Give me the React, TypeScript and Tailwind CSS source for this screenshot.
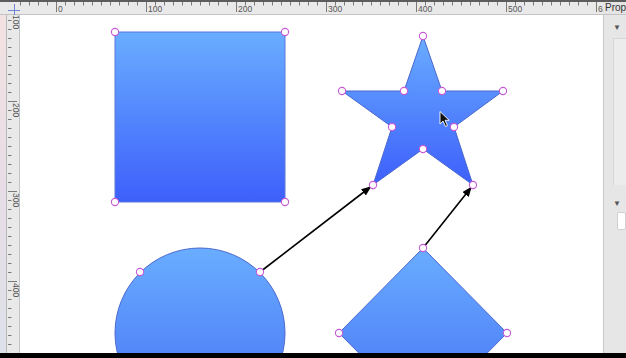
import React from 'react';

const HANDLE = '#c65bd6';

const topTicks: number[] = [];
for (let x = 20; x <= 604; x += 1) {
  if ((x - 56) % 9 === 0) topTicks.push(x);
}
const leftTicks: number[] = [];
for (let y = 11; y <= 353; y += 9) leftTicks.push(y);

const topLabels = [
  { x: 56, t: '0' },
  { x: 146, t: '100' },
  { x: 236, t: '200' },
  { x: 326, t: '300' },
  { x: 416, t: '400' },
  { x: 506, t: '500' },
  { x: 596, t: '600' },
];
const leftLabels = [
  { y: 13, t: '100' },
  { y: 101, t: '200' },
  { y: 191, t: '300' },
  { y: 281, t: '400' },
];

function Handle({ x, y }: { x: number; y: number }) {
  return <circle cx={x} cy={y} r={3.6} fill="#fff" stroke={HANDLE} strokeWidth={1.1} />;
}

function TopRuler() {
  return (
    <svg width={583} height={13} viewBox="20 2 583 13" className="block">
      <rect x={20} y={2} width={583} height={13} fill="#e9e9e9" />
      <line x1={20} y1={14.5} x2={603} y2={14.5} stroke="#c4c4c4" />
      {topTicks.map((x) => {
        const long = (x - 56) % 90 === 0;
        return (
          <line key={x} x1={x + 0.5} y1={2} x2={x + 0.5} y2={long ? 12 : 5.5} stroke="#7a7a7a" strokeWidth={1} />
        );
      })}
      {topLabels.map((l) => (
        <text key={l.t} x={l.x + 2} y={12} fontSize={8.5} fill="#555" fontFamily="'Liberation Sans', Arial, sans-serif">
          {l.t}
        </text>
      ))}
    </svg>
  );
}

function LeftRuler() {
  return (
    <svg width={13} height={338} viewBox="7 15 13 338" className="block">
      <rect x={7} y={15} width={13} height={338} fill="#e9e9e9" />
      <line x1={19.5} y1={15} x2={19.5} y2={353} stroke="#c4c4c4" />
      {leftTicks.map((y) => {
        const long = (y - 11) % 90 === 0;
        return <line key={y} x1={8} y1={y + 0.5} x2={long ? 17 : 11.5} y2={y + 0.5} stroke="#7a7a7a" strokeWidth={1} />;
      })}
      {leftLabels.map((l) => (
        <text
          key={l.t}
          x={0}
          y={0}
          transform={`translate(13 ${l.y + 2}) rotate(90)`}
          fontSize={8.5}
          fill="#555"
          fontFamily="'Liberation Sans', Arial, sans-serif"
        >
          {l.t}
        </text>
      ))}
    </svg>
  );
}

function Canvas() {
  const star = [
    [423, 36],
    [442, 91],
    [503, 91],
    [454, 127],
    [473, 185],
    [423, 149],
    [373, 185],
    [392, 127],
    [342, 91],
    [404, 91],
  ];
  return (
    <svg width={583} height={338} viewBox="20 15 583 338" className="block bg-white">
      <defs>
        <linearGradient id="g" x1="0" y1="0" x2="0" y2="1">
          <stop offset="0" stopColor="#69adff" />
          <stop offset="1" stopColor="#3d5ffb" />
        </linearGradient>
        <linearGradient id="gc" x1="0" y1="0" x2="0" y2="1">
          <stop offset="0" stopColor="#69adff" />
          <stop offset="1" stopColor="#4670f5" />
        </linearGradient>
        <marker id="ah" viewBox="0 0 10 8" refX={9.5} refY={4} markerWidth={10} markerHeight={8} markerUnits="userSpaceOnUse" orient="auto">
          <path d="M0 0 L10 4 L0 8 Z" fill="#000" />
        </marker>
      </defs>
      <rect x={20} y={15} width={583} height={338} fill="#fff" />

      {/* square */}
      <rect x={115} y={32} width={170} height={170} fill="url(#g)" stroke="#5a78d8" strokeWidth={1} />

      {/* star */}
      <polygon points={star.map((p) => p.join(',')).join(' ')} fill="url(#g)" stroke="#4a68d0" strokeWidth={1} />

      {/* circle */}
      <circle cx={200} cy={333} r={85} fill="url(#gc)" stroke="#4a68d0" strokeWidth={1} />

      {/* diamond */}
      <polygon points="423,248 507,333 423,418 339,333" fill="url(#gc)" stroke="#4a68d0" strokeWidth={1} />

      {/* connectors */}
      <line x1={260} y1={272} x2={371} y2={186.5} stroke="#000" strokeWidth={1.6} markerEnd="url(#ah)" />
      <line x1={423} y1={248} x2={471.5} y2={187} stroke="#000" strokeWidth={1.6} markerEnd="url(#ah)" />

      {/* handles */}
      <Handle x={115} y={32} />
      <Handle x={285} y={32} />
      <Handle x={115} y={202} />
      <Handle x={285} y={202} />
      {star.map((p, i) => (
        <Handle key={i} x={p[0]} y={p[1]} />
      ))}
      <Handle x={140} y={272} />
      <Handle x={260} y={272} />
      <Handle x={423} y={248} />
      <Handle x={339} y={333} />
      <Handle x={507} y={333} />

      {/* mouse pointer */}
      <path
        d="M440 111.5 L440 124 L443 121 L445.5 126.5 L447.5 125.6 L445.1 120.3 L449.2 120.3 Z"
        fill="#111"
        stroke="#fff"
        strokeWidth={0.9}
        strokeLinejoin="round"
      />
    </svg>
  );
}

export default function App() {
  return (
    <div className="w-[626px] h-[358px] flex flex-col bg-black overflow-hidden font-['Liberation_Sans',Arial,sans-serif]">
      <div className="h-[2px] bg-[#5c5c5c]" />
      <div className="flex h-[13px]">
        {/* ruler corner */}
        <div className="relative w-[20px] bg-[#e9e9e9] border-b border-[#c4c4c4]">
          <div className="absolute left-[8px] top-[8px] w-[12px] h-px bg-[#6f86d6]" />
          <div className="absolute left-[14px] top-[2px] w-px h-[11px] bg-[#6f86d6]" />
        </div>
        <TopRuler />
        <div className="w-[23px] bg-[#e4e4e4] border-b border-[#c4c4c4] text-[10px] leading-[12px] text-[#333] pl-[2px] whitespace-nowrap overflow-hidden">
          Properties
        </div>
      </div>
      <div className="flex h-[338px]">
        <div className="w-[7px] bg-gradient-to-b from-[#f3e2e2] via-[#e8dde6] to-[#dde1ea] border-r border-[#b9b9b9]" />
        <LeftRuler />
        <Canvas />
        <div className="w-[23px] bg-[#e6e6e6] border-l border-[#c9c9c9] flex flex-col pl-[9px]">
          <div className="mt-[8px] text-[8px] leading-[10px] text-[#555]">▼</div>
          <div className="mt-[5px] h-[147px] border-l border-t border-[#d6d6d6] bg-[#ececec]" />
          <div className="mt-[14px] text-[8px] leading-[10px] text-[#555]">▼</div>
          <div className="mt-[3px] ml-[4px] h-[18px] bg-white border border-[#d0d0d0] rounded-[2px]" />
        </div>
      </div>
    </div>
  );
}
